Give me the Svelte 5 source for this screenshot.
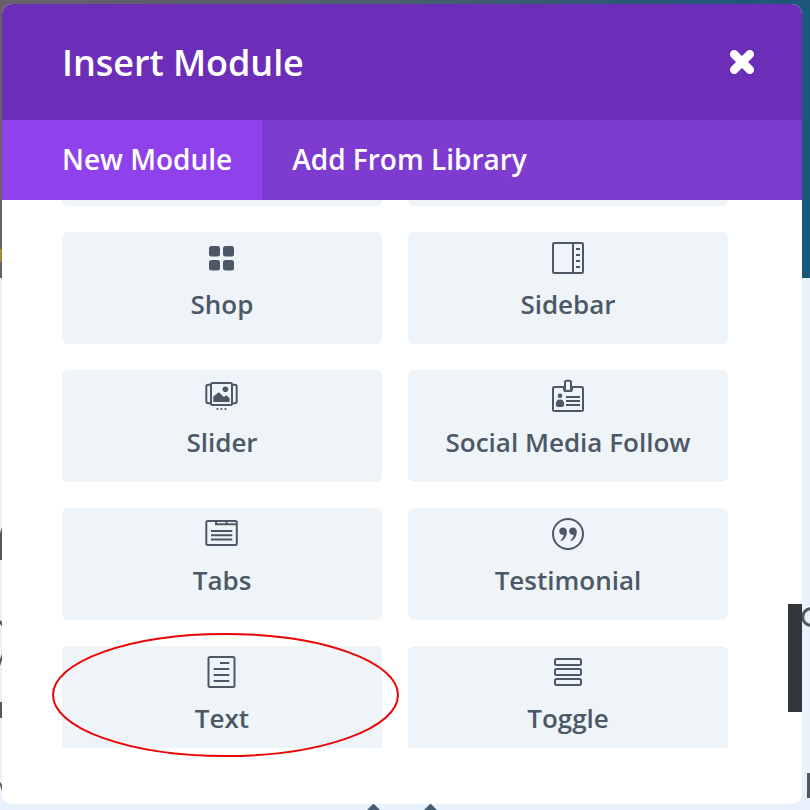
<script lang="ts">
	type Module = { name: string; icon: string };

	const tabs = ['New Module', 'Add From Library'];
	let active = $state('New Module');

	const modules: Module[] = [
		{ name: '', icon: '' },
		{ name: '', icon: '' },
		{ name: 'Shop', icon: 'shop' },
		{ name: 'Sidebar', icon: 'sidebar' },
		{ name: 'Slider', icon: 'slider' },
		{ name: 'Social Media Follow', icon: 'social' },
		{ name: 'Tabs', icon: 'tabs' },
		{ name: 'Testimonial', icon: 'testimonial' },
		{ name: 'Text', icon: 'text' },
		{ name: 'Toggle', icon: 'toggle' }
	];
</script>

<main class="page">
	<div class="hero"></div>

	<!-- page content that peeks out around the modal -->
	<svg class="behind" viewBox="0 0 810 810" aria-hidden="true">
		<path class="gold" d="M0 249h2v13h-2z" />
		<path class="ink" d="M0 533l2-6v33H0zM0 620l2 2v4l-2-2zM0 659l2-5v6l-2 6zM0 702h2v16H0zM0 782l2 3v6l-2-6z" />
		<circle class="ring" cx="811" cy="617" r="8.3" />
		<path class="ink" d="M807 773h3v25h-3z" />
		<path class="arrow" d="M367 810l6.500-6.500L380 810zM424 810l6.500-6.500L437 810z" />
	</svg>

	<section class="modal">
		<header class="header">
			<h1>Insert Module</h1>
			<button class="close" aria-label="Close">
				<svg viewBox="0 0 24 24"><path d="M4.200 4.300l15.600 15.400M19.800 4.300L4.200 19.700" /></svg>
			</button>
		</header>
		<nav class="tabs">
			{#each tabs as tab}
				<button class="tab" class:active={active === tab} onclick={() => (active = tab)}>{tab}</button>
			{/each}
		</nav>
		<div class="list">
			<div class="grid">
				{#each modules as m}
					<div class="module">
						<svg class="icon" viewBox="0 0 36 36">
							{#if m.icon === 'shop'}
								<g class="solid">
									<rect x="5" y="6" width="11" height="10.500" rx="2.500" />
									<rect x="19" y="6" width="11" height="10.500" rx="2.500" />
									<rect x="5" y="20" width="11" height="10.500" rx="2.500" />
									<rect x="19" y="20" width="11" height="10.500" rx="2.500" />
								</g>
							{:else if m.icon === 'sidebar'}
								<rect x="3" y="3" width="30" height="30" rx="1.500" />
								<path d="M23 3v30M26 9h4M26 15h4M26 21h4M26 27h4" />
							{:else if m.icon === 'slider'}
								<rect x="7" y="5" width="21" height="22" rx="1.500" />
								<path d="M7 6.700H4.300Q2.300 6.700 2.300 9v14q0 2.300 2 2.300H7M28 6.700h2.700q2 0 2 2.300v14q0 2.300-2 2.300H28" />
								<g class="solid">
									<circle cx="21.400" cy="11.300" r="2.800" />
									<path d="M9.300 24v-5.500l5.500-4.200 5.200 4.700 2-1.700 3.600 2.700v4z" />
									<circle cx="13.500" cy="31" r="1.100" />
									<circle cx="17.500" cy="31" r="1.100" />
									<circle cx="21.500" cy="31" r="1.100" />
								</g>
							{:else if m.icon === 'social'}
								<path d="M15 9H4.500Q3 9 3 10.500v21Q3 33 4.500 33h27q1.500 0 1.500-1.500v-21Q33 9 31.500 9H21" />
								<path d="M15 4.300q0-1.500 1.500-1.500h3q1.500 0 1.500 1.500v7q0 1.700-1.700 1.700h-2.600q-1.700 0-1.700-1.700z" />
								<path d="M14 9v2.500q0 1.500 1.500 2M22 9v2.500q0 1.500-1.500 2M16 19h14M16 23h14M16 27h14" />
								<g class="solid">
									<circle cx="10" cy="17.800" r="2.300" />
									<path d="M10 21.500c2.700 0 4.200 2 4.200 4.500 0 2-.8 3-2.400 3H8.200c-1.600 0-2.400-1-2.400-3 0-2.500 1.500-4.500 4.200-4.500z" />
								</g>
							{:else if m.icon === 'tabs'}
								<rect x="2.300" y="5" width="30.500" height="24" rx="1.500" />
								<path d="M12 5v3.200h20.500M22.600 5v3.200M7 15h21.300M7 19.200h21.300M7 23.400h21.300" />
							{:else if m.icon === 'testimonial'}
								<circle cx="18" cy="18" r="15" />
								<g class="solid">
									<path d="M13 11.500c2.500 0 3.900 1.600 3.900 4.300 0 4.300-2.200 7.600-5.400 9.400l-.9-1.100c1.800-1.400 2.900-3.300 3.100-5.400-2.500.5-4.500-1-4.500-3.600 0-2 1.600-3.600 3.800-3.600z" />
									<path d="M22.900 11.500c2.500 0 3.900 1.600 3.900 4.300 0 4.300-2.200 7.600-5.400 9.400l-.9-1.100c1.800-1.400 2.900-3.300 3.100-5.400-2.500.5-4.500-1-4.500-3.600 0-2 1.600-3.600 3.800-3.600z" />
								</g>
							{:else if m.icon === 'text'}
								<rect x="4.500" y="3" width="26" height="30" rx="1.500" />
								<path d="M16 9h9.300M9.700 15h15.600M9.700 21h15.600M9.700 27h15.600" />
							{:else if m.icon === 'toggle'}
								<rect x="5" y="5" width="26" height="6" rx="1.500" />
								<rect x="5" y="15" width="26" height="6" rx="1.500" />
								<rect x="5" y="25" width="26" height="6" rx="1.500" />
							{/if}
						</svg>
						<span class="name">{m.name}</span>
					</div>
				{/each}
			</div>
		</div>
	</section>

	<div class="scrollbar"></div>
	<svg class="highlight" viewBox="0 0 350 126" aria-hidden="true">
		<ellipse cx="174.500" cy="63" rx="172.500" ry="61" />
	</svg>
</main>

<style>
	:global(body) {
		margin: 0;
		overflow: hidden;
	}

	.page {
		position: relative;
		box-sizing: border-box;
		width: 810px;
		height: 810px;
		padding: 4px 8px 6px 2px;
		overflow: hidden;
		background: #e8f2fc;
		font-family: 'Open Sans', sans-serif;
		font-weight: 600;
	}

	.hero {
		position: absolute;
		inset: 0 0 auto;
		height: 278px;
		background: linear-gradient(90deg, #686069, #52606d 40%, #245675 85%, #1a587c);
	}

	.behind {
		position: absolute;
		inset: 0;
	}

	.gold {
		fill: #a18a38;
	}

	.ink {
		fill: #50585f;
	}

	.ring {
		fill: none;
		stroke: #50585f;
		stroke-width: 3;
	}

	.arrow {
		fill: #465d72;
	}

	.modal {
		position: relative;
		height: 800px;
		border-radius: 10px;
		overflow: hidden;
		background: #fff;
	}

	.header {
		display: flex;
		align-items: center;
		justify-content: space-between;
		box-sizing: border-box;
		height: 116px;
		padding: 0 48px 0 60px;
		background: #6c2eb9;
		color: #fff;
	}

	h1 {
		margin: 2px 0 0;
		font-size: 36px;
		font-weight: 600;
		line-height: 48px;
		letter-spacing: -0.05px;
	}

	.close {
		width: 24px;
		height: 24px;
		padding: 0;
		border: 0;
		background: none;
	}

	.close svg {
		display: block;
		overflow: visible;
		fill: none;
		stroke: #fff;
		stroke-width: 8.5;
		stroke-linecap: round;
	}

	.tabs {
		display: flex;
		height: 80px;
		background: #7e3bd0;
	}

	.tab {
		padding: 0 30px 2px;
		border: 0;
		background: none;
		color: #fff;
		font: inherit;
		font-size: 28px;
	}

	.tab:first-child {
		padding-left: 60px;
	}

	.tab.active {
		background: #8f42ec;
	}

	.list {
		height: 548px;
		padding: 0 60px;
		overflow: hidden;
	}

	.grid {
		display: grid;
		grid-template-columns: 320px 320px;
		grid-auto-rows: 112px;
		gap: 26px;
		margin-top: -106px;
	}

	.module {
		display: flex;
		flex-direction: column;
		align-items: center;
		box-sizing: border-box;
		padding-top: 8px;
		border-radius: 6px;
		background: #eff4f9;
		color: #4c5866;
	}

	.icon {
		width: 36px;
		height: 36px;
		fill: none;
		stroke: currentColor;
		stroke-width: 2;
	}

	.solid {
		fill: currentColor;
		stroke: none;
	}

	.name {
		margin-top: 10px;
		font-size: 26px;
		line-height: 36px;
	}

	.scrollbar {
		position: absolute;
		left: 788px;
		top: 604px;
		width: 14px;
		height: 108px;
		background: #32373c;
	}

	.highlight {
		position: absolute;
		left: 51px;
		top: 632px;
		width: 350px;
		height: 126px;
		fill: none;
		stroke: #ea0505;
		stroke-width: 2;
	}
</style>
